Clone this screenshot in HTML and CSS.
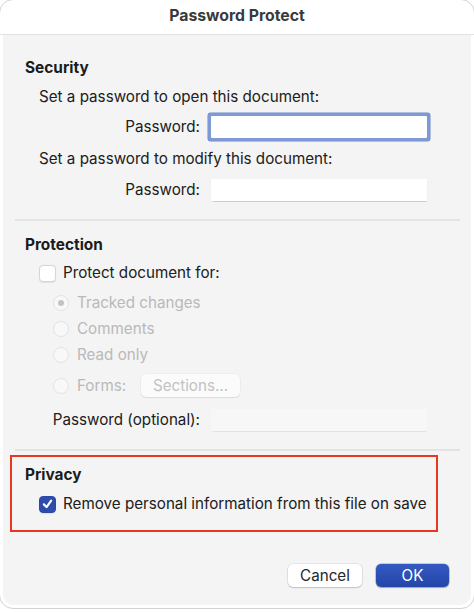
FILE: index.html
```html
<!DOCTYPE html>
<html lang="en">
<head>
<meta charset="utf-8">
<title>Password Protect</title>
<link rel="stylesheet" href="styles.css">
</head>
<body>
<div class="window">
  <div class="titlebar">Password Protect</div>
  <div class="panel">
    <section class="group security">
      <h2 class="heading">Security</h2>
      <p class="prompt first">Set a password to open this document:</p>
      <div class="field-row row-open">
        <span class="field-label">Password:</span>
        <span class="input focused"></span>
      </div>
      <p class="prompt second">Set a password to modify this document:</p>
      <div class="field-row row-modify">
        <span class="field-label">Password:</span>
        <span class="input"></span>
      </div>
    </section>

    <div class="divider first-divider"></div>

    <section class="group protection">
      <h2 class="heading">Protection</h2>
      <div class="check-row protect-row">
        <span class="checkbox"></span>
        <span class="check-text">Protect document for:</span>
      </div>
      <div class="radio-row r1"><span class="radio selected"></span><span class="radio-text">Tracked changes</span></div>
      <div class="radio-row r2"><span class="radio"></span><span class="radio-text">Comments</span></div>
      <div class="radio-row r3"><span class="radio"></span><span class="radio-text">Read only</span></div>
      <div class="radio-row r4 forms-row">
        <span class="radio"></span><span class="radio-text forms-label">Forms:</span>
        <span class="sections-btn">Sections...</span>
      </div>
      <div class="field-row row-optional">
        <span class="field-label">Password (optional):</span>
        <span class="input disabled"></span>
      </div>
    </section>

    <div class="divider second-divider"></div>

    <section class="privacy-box">
      <h2 class="heading">Privacy</h2>
      <div class="check-row privacy-row">
        <span class="checkbox checked">
          <svg viewBox="0 0 16 16" width="16" height="16" aria-hidden="true"><path d="M4.1 8.4 L7 11.3 L11.9 4.5" fill="none" stroke="#fff" stroke-width="2.3" stroke-linecap="round" stroke-linejoin="round"/></svg>
        </span>
        <span class="check-text">Remove personal information from this file on save</span>
      </div>
    </section>

    <div class="actions">
      <button class="btn cancel">Cancel</button>
      <button class="btn ok">OK</button>
    </div>
  </div>
</div>
</body>
</html>
```

FILE: styles.css
```css
html, body {
  margin: 0;
  padding: 0;
  background: #ffffff;
  overflow: hidden;
}

body {
  width: 474px;
  height: 612px;
  font-family: "Inter", "Liberation Sans", sans-serif;
  font-size: 15.2px;
  line-height: 18px;
  color: #202020;
}

.window {
  box-sizing: border-box;
  margin: -1px 0 0 -1px;
  width: 476px;
  height: 610px;
  border: 1px solid #d2d2d2;
  border-radius: 14px;
  background: #ffffff;
  overflow: hidden;
  display: flex;
  flex-direction: column;
}

.titlebar {
  box-sizing: border-box;
  height: 35px;
  padding-top: 7px;
  border-bottom: 1px solid #e3e3e3;
  text-align: center;
  font-weight: 700;
  font-size: 15.8px;
  color: #3a3a3a;
  flex: none;
}

.panel {
  flex: 1;
  margin: 0 3px 3px 3px;
  background: #f4f4f4;
  border-radius: 0 0 11px 11px;
  padding-top: 24px;
  display: flex;
  flex-direction: column;
}

.group {
  padding-left: 22px;
  display: flex;
  flex-direction: column;
}

.heading {
  margin: 0;
  font-size: 15.4px;
  font-weight: 700;
  line-height: 18px;
  color: #1c1c1c;
}

.prompt {
  margin: 0 0 0 14px;
  line-height: 18px;
}

.prompt.first { margin-top: 11px; }
.prompt.second { margin-top: 12px; }

.field-row {
  display: grid;
  grid-template-columns: 175px 216px;
  column-gap: 11px;
  align-items: center;
  height: 22px;
}

.row-open { margin-top: 10px; }
.row-modify { margin-top: 11px; }
.row-optional { margin-top: 12px; }

.field-label {
  text-align: right;
  white-space: nowrap;
}

.input {
  display: block;
  height: 22px;
  background: #ffffff;
  box-shadow: 0 0.5px 1px rgba(0, 0, 0, 0.16);
}

.input.focused {
  box-shadow: 0 0 0 3px #7f98d6, 0 0 0 3.5px #6f8ac9;
  border-radius: 1px;
}

.input.disabled {
  background: #f7f7f7;
  box-shadow: 0 0.5px 1px rgba(0, 0, 0, 0.07);
}

.divider {
  height: 2px;
  margin: 18px 11px 0 12px;
  background: #e3e3e3;
  flex: none;
}

.protection .heading { margin-top: 15px; }

.check-row {
  display: flex;
  align-items: center;
  margin-left: 14px;
  height: 18px;
}

.protect-row { margin-top: 10px; }

.checkbox {
  box-sizing: border-box;
  width: 17px;
  height: 17px;
  border-radius: 4px;
  background: #ffffff;
  border: 1px solid #d6d6d6;
  box-shadow: 0 0.5px 1px rgba(0, 0, 0, 0.08);
  margin-right: 7px;
  flex: none;
  display: flex;
  align-items: center;
  justify-content: center;
}

.checkbox.checked {
  background: #2c4cae;
  border-color: #2a48a6;
}

.checkbox svg { display: block; }

.radio-row {
  display: flex;
  align-items: center;
  margin-left: 28px;
  height: 18px;
  color: #b9b9b9;
}

.r1 { margin-top: 12px; }
.r2, .r3 { margin-top: 8px; }

.forms-row {
  margin-top: 10px;
  height: 23px;
}

.radio {
  box-sizing: border-box;
  width: 16px;
  height: 16px;
  border-radius: 50%;
  background: #f8f8f8;
  border: 1px solid #e3e3e3;
  margin-right: 8px;
  flex: none;
  display: flex;
  align-items: center;
  justify-content: center;
}

.radio.selected::after {
  content: "";
  width: 6px;
  height: 6px;
  border-radius: 50%;
  background: #c3c3c3;
}

.forms-label { width: 64px; }

.sections-btn {
  box-sizing: border-box;
  width: 99px;
  height: 23px;
  border-radius: 5px;
  background: #fbfbfb;
  box-shadow: 0 0 0 0.5px rgba(0, 0, 0, 0.05), 0 1px 1px rgba(0, 0, 0, 0.08);
  color: #c2c2c2;
  text-align: center;
  line-height: 23px;
}

.second-divider { margin-top: 18px; }

.privacy-box {
  box-sizing: border-box;
  width: 428px;
  margin: 4px 0 0 7px;
  border: 2px solid #e8361f;
  padding: 9px 0 17px 13px;
  display: flex;
  flex-direction: column;
}

.privacy-row { margin-top: 11px; }

.actions {
  display: flex;
  justify-content: flex-end;
  gap: 14px;
  padding-right: 22px;
  margin-top: 32px;
}

.btn {
  font-family: inherit;
  font-size: 15.2px;
  height: 23px;
  border: none;
  border-radius: 5px;
  padding: 0;
  line-height: 23px;
  cursor: default;
}

.btn.cancel {
  width: 74px;
  background: #ffffff;
  color: #262626;
  box-shadow: 0 0 0 0.5px rgba(0, 0, 0, 0.12), 0 1px 1.5px rgba(0, 0, 0, 0.16);
}

.btn.ok {
  width: 73px;
  background: linear-gradient(#3459c2, #2446a8);
  color: #ffffff;
  box-shadow: 0 0 0 0.5px rgba(20, 40, 110, 0.4), 0 1px 1.5px rgba(0, 0, 0, 0.2);
}
```
